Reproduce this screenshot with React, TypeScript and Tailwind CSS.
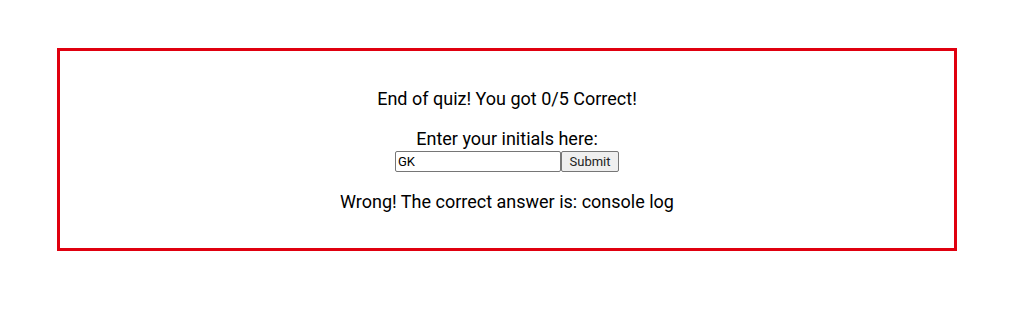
export default function App() {
  return (
    <div className="w-full bg-white pt-[48px]" style={{ fontFamily: "Roboto, 'Noto Sans', sans-serif" }}>
      <div className="ml-[57px] w-[900px] h-[203px] border-[3px] border-[#e0000f] flex flex-col items-center text-black">
        <p className="mt-[37px] text-[18px] leading-[22px]">End of quiz! You got 0/5 Correct!</p>
        <p className="mt-[18px] text-[18px] leading-[22px]">Enter your initials here:</p>
        <div className="mt-[1px] flex items-center">
          <input
            defaultValue="GK"
            className="w-[166px] h-[21px] border border-[#767676] rounded-[2px] px-[2px] text-[13px] leading-[16px] outline-none"
            style={{ fontFamily: "Roboto, sans-serif" }}
          />
          <button className="h-[21px] w-[58px] border border-[#767676] rounded-[2px] bg-[#efefef] text-[13px] leading-[16px] text-[#222]">
            Submit
          </button>
        </div>
        <p className="mt-[19px] text-[18px] leading-[22px]">Wrong! The correct answer is: console log</p>
      </div>
    </div>
  );
}
